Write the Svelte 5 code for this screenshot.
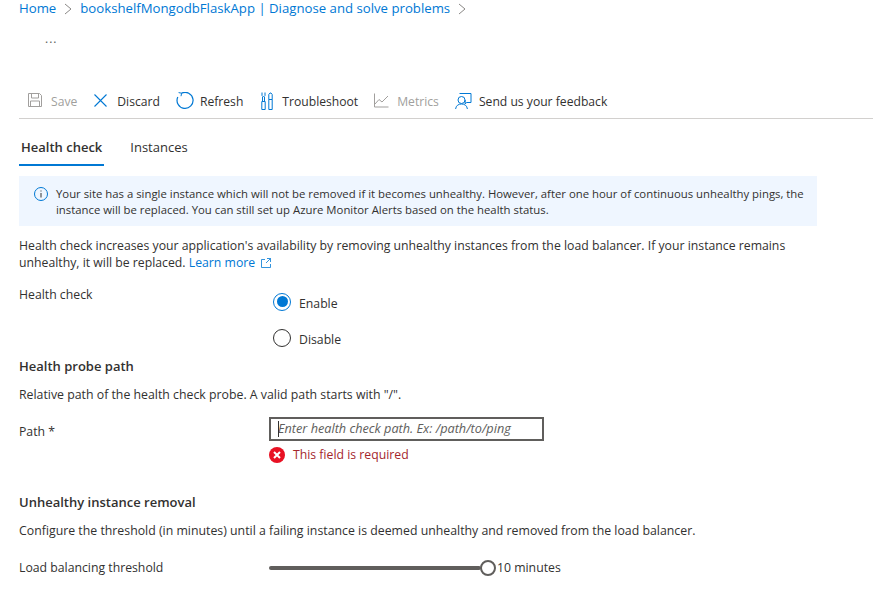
<script>
  const tools = [
    { id: 'save', label: 'Save', off: true },
    { id: 'discard', label: 'Discard' },
    { id: 'refresh', label: 'Refresh' },
    { id: 'trouble', label: 'Troubleshoot' },
    { id: 'metrics', label: 'Metrics', off: true },
    { id: 'feedback', label: 'Send us your feedback' }
  ];
</script>

<div class="page">
  <nav class="crumbs">
    <a href="#home">Home</a>
    <svg class="chev" viewBox="0 0 10 14" width="10" height="14"><path d="M2 2l6 5-6 5" /></svg>
    <a href="#app">bookshelfMongodbFlaskApp | Diagnose and solve problems</a>
    <svg class="chev" viewBox="0 0 10 14" width="10" height="14"><path d="M2 2l6 5-6 5" /></svg>
  </nav>
  <div class="more">...</div>

  <div class="toolbar">
    {#each tools as t}
      <div class="tool {t.id}" class:off={t.off}>
        <svg viewBox="0 0 18 18" width="18" height="18" fill="none">
          {#if t.id === 'save'}
            <path d="M1.500 1.500h11l2 2v11h-13z M4.500 1.500v4.500h7v-4.500 M3.500 14.500v-5.500h9v5.500" stroke="#a19f9d" />
          {:else if t.id === 'discard'}
            <path d="M1.500 2.500l12 12M13.500 2.500l-12 12" stroke="#0078d4" stroke-width="1.100" />
          {:else if t.id === 'refresh'}
            <path d="M5.500 1.200A8 8 0 1 1 1.800 5" stroke="#0078d4" stroke-width="1.200" /><path d="M2.600 .6l3 .6-.6 3" stroke="#0078d4" />
          {:else if t.id === 'trouble'}
            <path d="M4 0.500v3l1.500 1.500 1.500-1.500v-3M4.500 5v4.500M6.500 5v4.500M3.800 9.500h3.400v8h-3.400zM10.800 7.500h3.400v10h-3.400zM10.800 7.500v-5l1.200-1.500h1l1.200 1.500v5" stroke="#0078d4" />
          {:else if t.id === 'metrics'}
            <path d="M1.500 1.500v13.500h14" stroke="#a19f9d" /><path d="M2 12l4-4.500 3 2.500 6-6" stroke="#a19f9d" />
          {:else}
            <path d="M4.500 1.500h11.500v9h-4.500l-1.300 1.500v-4" stroke="#0078d4" /><circle cx="6.500" cy="8" r="3.500" stroke="#0078d4" /><path d="M.6 17c.4-3.500 2.900-5 5.900-5s5.500 1.500 5.900 5" stroke="#0078d4" />
          {/if}
        </svg>
        <span>{t.label}</span>
      </div>
    {/each}
  </div>

  <div class="tabs">
    <div class="tab active">Health check</div>
    <div class="tab">Instances</div>
  </div>

  <div class="info">
    <svg viewBox="0 0 16 16" width="16" height="16" fill="none">
      <circle cx="8" cy="8" r="6.500" stroke="#0078d4" /><path d="M8 7v4.500M8 4.500v1" stroke="#323130" />
    </svg>
    <p>Your site has a single instance which will not be removed if it becomes unhealthy. However, after one hour of continuous unhealthy pings, the instance will be replaced. You can still set up Azure Monitor Alerts based on the health status.</p>
  </div>

  <p class="intro">Health check increases your application's availability by removing unhealthy instances from the load balancer. If your instance remains unhealthy, it will be replaced. <a href="#more">Learn more</a>
    <svg class="ext" viewBox="0 0 10 10" width="10" height="10" fill="none"><path d="M4 1.500H.5v8h9V6M6 .5h3.500V4M9.500 .5L5 5" stroke="#0078d4" stroke-width=".8" /></svg>
  </p>

  <div class="row health">
    <div class="label">Health check</div>
    <div class="radios">
      <div class="radio"><span class="dot on"></span>Enable</div>
      <div class="radio"><span class="dot"></span>Disable</div>
    </div>
  </div>

  <h2 class="probe">Health probe path</h2>
  <p class="desc">Relative path of the health check probe. A valid path starts with "/".</p>

  <div class="row path">
    <div class="label">Path *</div>
    <div>
      <div class="input"><i class="caret"></i><span>Enter health check path. Ex: /path/to/ping</span></div>
      <div class="err">
        <svg viewBox="0 0 16 16" width="16" height="16"><circle cx="8" cy="8" r="8" fill="#e81123" /><path d="M5 5l6 6M11 5l-6 6" stroke="#fff" stroke-width="2" /></svg>
        This field is required
      </div>
    </div>
  </div>

  <h2 class="unhealthy">Unhealthy instance removal</h2>
  <p class="desc">Configure the threshold (in minutes) until a failing instance is deemed unhealthy and removed from the load balancer.</p>

  <div class="row load">
    <div class="label">Load balancing threshold</div>
    <div class="slider"><div class="track"></div><div class="thumb"></div><span>10 minutes</span></div>
  </div>
</div>

<style>
  :global(body) { margin: 0; background: #fff; }
  .page {
    font: 12.250px/17px "Open Sans", "Noto Sans", sans-serif;
    color: #323130;
    width: 873px;
    height: 616px;
    overflow: hidden;
    box-sizing: border-box;
    padding-left: 19px;
  }
  a { color: #0078d4; text-decoration: none; }
  p { margin: 0; }
  .crumbs { display: flex; align-items: center; gap: 7px; height: 17px; font-size: 13.200px; }
  .chev { fill: none; stroke: #8a8886; stroke-width: 1; }
  .more { margin: 13px 0 0 26px; height: 17px; color: #605e5c; font-size: 12px; letter-spacing: 1px; }
  .toolbar {
    display: flex;
    align-items: center;
    height: 34px;
    margin-top: 37px;
    padding: 0 8px;
    border-bottom: 1px solid #d2d0ce;
    font-size: 12.150px;
  }
  .tool { display: flex; align-items: center; gap: 6px; margin-right: 16px; white-space: nowrap; }
  .tool.refresh, .tool.trouble { margin-right: 15px; }
  .tool.off { color: #a19f9d; }
  .tabs { display: flex; height: 46px; gap: 24px; }
  .tab { padding: 20px 2px 0; box-sizing: border-box; height: 47px; font-size: 13px; }
  .tab.active { font-weight: 600; border-bottom: 2px solid #0078d4; }
  .info {
    display: flex;
    gap: 7px;
    width: 798px;
    height: 50px;
    margin-top: 11px;
    padding: 10px 10px 0 14px;
    box-sizing: border-box;
    background: #eff6ff;
    font-size: 11.350px;
    line-height: 16px;
  }
  .info svg { flex: none; }
  .intro { margin-top: 11px; width: 790px; }
  .ext { margin-left: 3px; vertical-align: -1px; }
  .row { display: grid; grid-template-columns: 250px 1fr; }
  .health { margin-top: 15px; }
  .radios { display: flex; flex-direction: column; gap: 18px; margin-top: 8px; }
  .radio { display: flex; align-items: center; gap: 8px; height: 18px; }
  .dot {
    width: 18px; height: 18px; box-sizing: border-box;
    border: 1.500px solid #323130; border-radius: 50%;
    margin: -3px 0 0 4px;
    position: relative;
  }
  .dot.on { border-color: #0078d4; }
  .dot.on::after {
    content: ""; position: absolute; inset: 2.500px;
    background: #0078d4; border-radius: 50%;
  }
  h2 { font-size: 13px; font-weight: 600; line-height: 17px; margin: 0; }
  .probe { margin-top: 10px; }
  .desc { margin-top: 11px; font-size: 12.320px; }
  .path { margin-top: 14px; }
  .path .label { margin-top: 6px; }
  .input {
    width: 275px; height: 24px; box-sizing: border-box;
    border: 2px solid #605e5c;
    display: flex; align-items: center;
    padding: 0 0 2px 7px;
    font-style: italic;
    font-size: 12.700px;
    color: #605e5c;
    position: relative;
  }
  .caret { position: absolute; left: 7px; top: 2px; bottom: 2px; width: 1px; background: #323130; }
  .err { display: flex; align-items: center; gap: 8px; margin-top: 5px; color: #a4262c; }
  .unhealthy { margin-top: 31px; }
  .load { margin-top: 20px; }
  .slider { display: flex; align-items: center; height: 17px; position: relative; }
  .track { width: 212px; height: 4px; border-radius: 2px; background: #605e5c; }
  .thumb { width: 16px; height: 16px; box-sizing: border-box; border: 2px solid #605e5c; border-radius: 50%; background: #fff; margin-left: -1px; }
  .slider span { margin-left: 1px; }
</style>
